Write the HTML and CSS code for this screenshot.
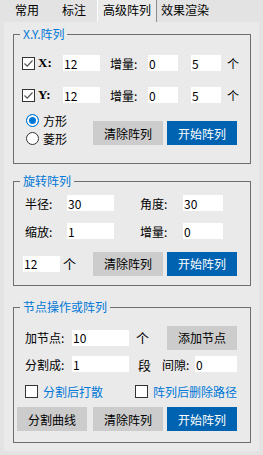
FILE: index.html
```html
<!DOCTYPE html>
<html>

<head lang="zh">
    <meta charset="UTF-8">
    <title>高级阵列</title>
    <link rel="stylesheet" href="styles.css">
</head>

<body>
    <div class="tabs">
        <span class="tab t1">常用</span>
        <span class="tab t2">标注</span>
        <span class="tab active">高级阵列</span>
        <span class="tab t4">效果渲染</span>
    </div>

    <div class="panel">
        <!-- X.Y.阵列 -->
        <fieldset class="group g1">
            <legend>X.Y.阵列</legend>
            <div class="xy-row">
                <span class="check on"><svg width="11" height="11" viewBox="0 0 11 11"><path d="M1.5 5.5 L4.2 8.2 L9.5 2.5" fill="none" stroke="#555" stroke-width="1.2"/></svg></span>
                <span class="axis">X:</span>
                <input class="num w37" type="text" value="12">
                <span class="inc">增量:</span>
                <input class="num w30" type="text" value="0">
                <input class="num w30 gap13" type="text" value="5">
                <span class="unit">个</span>
            </div>
            <div class="xy-row">
                <span class="check on"><svg width="11" height="11" viewBox="0 0 11 11"><path d="M1.5 5.5 L4.2 8.2 L9.5 2.5" fill="none" stroke="#555" stroke-width="1.2"/></svg></span>
                <span class="axis">Y:</span>
                <input class="num w37" type="text" value="12">
                <span class="inc">增量:</span>
                <input class="num w30" type="text" value="0">
                <input class="num w30 gap13" type="text" value="5">
                <span class="unit">个</span>
            </div>
            <div class="shape-row">
                <div class="radios">
                    <div class="radio-line"><span class="radio on"></span>方形</div>
                    <div class="radio-line"><span class="radio"></span>菱形</div>
                </div>
                <div class="btns">
                    <button class="btn">清除阵列</button>
                    <button class="btn primary">开始阵列</button>
                </div>
            </div>
        </fieldset>

        <!-- 旋转阵列 -->
        <fieldset class="group g2">
            <legend>旋转阵列</legend>
            <div class="row">
                <span class="lbl-a">半径:</span>
                <input class="num w47" type="text" value="30">
                <span class="lbl-b">角度:</span>
                <input class="num w40" type="text" value="30">
            </div>
            <div class="row">
                <span class="lbl-a">缩放:</span>
                <input class="num w47" type="text" value="1">
                <span class="lbl-b">增量:</span>
                <input class="num w40" type="text" value="0">
            </div>
            <div class="row tall count-row">
                <input class="num w37" type="text" value="12">
                <span class="count-unit">个</span>
                <button class="btn">清除阵列</button>
                <button class="btn primary ml4">开始阵列</button>
            </div>
        </fieldset>

        <!-- 节点操作或阵列 -->
        <fieldset class="group g3">
            <legend>节点操作或阵列</legend>
            <div class="row tall">
                <span class="lbl-c">加节点:</span>
                <input class="num w57" type="text" value="10">
                <span class="node-unit">个</span>
                <button class="btn">添加节点</button>
            </div>
            <div class="row split-row">
                <span class="lbl-c">分割成:</span>
                <input class="num w57" type="text" value="1">
                <span class="seg">段</span>
                <span class="lbl-gap">间隙:</span>
                <input class="num w42" type="text" value="0">
            </div>
            <div class="row opt-row">
                <span class="opt first"><span class="check"></span>分割后打散</span>
                <span class="opt"><span class="check"></span>阵列后删除路径</span>
            </div>
            <div class="btn-row">
                <button class="btn">分割曲线</button>
                <button class="btn ml6">清除阵列</button>
                <button class="btn primary ml4">开始阵列</button>
            </div>
        </fieldset>
    </div>
</body>

</html>
```

FILE: styles.css
```css
* {
    box-sizing: border-box;
}

body {
    margin: 0;
    width: 263px;
    height: 455px;
    overflow: hidden;
    background: #e3e3e3;
    font-family: "Noto Sans CJK SC", "Noto Sans", sans-serif;
    font-size: 12px;
    color: #000;
}

/* 顶部标签 */
.tabs {
    display: flex;
    height: 22px;
    padding-left: 9px;
}

.tab {
    height: 22px;
    line-height: 20px;
    padding: 0 6px;
}

.t2 {
    margin-left: 11px;
}

.tab.active {
    margin-left: 5px;
    padding: 0 5px;
    background: #eaeaea;
    border-left: 1px solid #fff;
    border-right: 1px solid #8c8c8c;
}

.tab.t4 {
    padding-left: 4px;
}

.panel {
    margin-left: 4px;
    width: 255px;
    height: 429px;
    padding-top: 5px;
    background: #eaeaea;
}

/* 分组框 */
.group {
    margin: 0 0 0 9px;
    width: 238px;
    min-width: 0;
    padding: 0;
    border: 1px solid #6e6e6e;
}

.group legend {
    margin-left: 6px;
    padding: 0 3px;
    line-height: 14px;
    color: #0078d7;
}

.g1 {
    padding: 14px 0 16px;
}

.g2 {
    margin-top: 10px;
    padding: 7px 0 9px;
}

.g3 {
    margin-top: 14px;
    padding: 11px 0 11px;
}

/* 输入框 */
.num {
    height: 16px;
    border: 0;
    padding: 0 0 0 1px;
    background: #fff;
    font: inherit;
    color: #000;
    outline: none;
}

.w30 { width: 30px; }
.w37 { width: 37px; }
.w40 { width: 40px; }
.w42 { width: 42px; }
.w47 { width: 47px; }
.w57 { width: 57px; }

.gap13 {
    margin-left: 13px;
}

/* 复选框 单选框 */
.check {
    display: inline-flex;
    align-items: center;
    justify-content: center;
    width: 13px;
    height: 13px;
    border: 1px solid #333;
    background: #fff;
    flex: none;
}

.radio {
    display: inline-block;
    width: 13px;
    height: 13px;
    margin-right: 4px;
    border: 1px solid #333;
    border-radius: 50%;
    background: #fff;
    flex: none;
}

.radio.on {
    border-color: #0078d7;
    background: #0078d7;
    box-shadow: inset 0 0 0 2px #fff;
}

/* X.Y. 行 */
.xy-row {
    display: flex;
    align-items: center;
    height: 16px;
    padding-left: 8px;
}

.xy-row + .xy-row {
    margin-top: 16px;
}

.axis {
    margin-left: 3px;
    width: 25px;
    font-family: "Liberation Serif", serif;
    font-weight: bold;
    font-size: 13px;
}

.inc {
    margin-left: 10px;
    width: 38px;
}

.unit {
    margin-left: 6px;
}

.shape-row {
    display: flex;
    margin-top: 8px;
}

.radios {
    width: 79px;
    padding-left: 12px;
}

.radio-line {
    display: flex;
    align-items: center;
    height: 18px;
}

.btns {
    display: flex;
    gap: 4px;
    margin-top: 10px;
}

/* 按钮 */
.btn {
    width: 70px;
    height: 24px;
    padding: 0;
    border: 0;
    background: #cccccc;
    font: inherit;
    color: #000;
    flex: none;
}

.btn.primary {
    background: #0063b1;
    color: #fff;
}

.ml4 { margin-left: 4px; }
.ml6 { margin-left: 6px; }

/* 普通行 */
.row {
    display: flex;
    align-items: center;
    height: 16px;
    padding-left: 11px;
}

.row + .row {
    margin-top: 12px;
}

.row.tall {
    height: 25px;
}

.lbl-a {
    width: 42px;
}

.lbl-b {
    margin-left: 26px;
    width: 43px;
}

.count-row {
    padding-left: 9px;
}

.count-unit {
    margin-left: 3px;
    width: 30px;
    font-size: 13px;
}

.lbl-c {
    width: 47px;
}

.node-unit {
    margin-left: 7px;
    width: 31px;
    font-size: 13px;
}

.g3 .split-row {
    margin-top: 6px;
}

.seg {
    margin-left: 9px;
    width: 24px;
    font-size: 13px;
}

.lbl-gap {
    width: 33px;
}

.g3 .opt-row {
    margin-top: 11px;
}

.opt {
    display: flex;
    align-items: center;
    color: #0078d7;
}

.opt .check {
    margin-right: 5px;
}

.opt.first {
    width: 110px;
}

.btn-row {
    display: flex;
    margin-top: 8px;
    padding-left: 3px;
}
```
